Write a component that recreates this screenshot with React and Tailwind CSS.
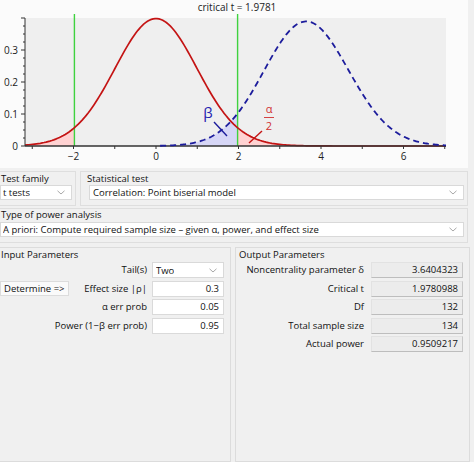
import React from "react";

function Chart() {
  const X = (t) => 156 + t * 41.25;
  const Y = (p) => 146 - p * 320;
  const df = 132;
  const c0 = 0.3982;
  const ft = (t) => c0 * Math.pow(1 + (t * t) / df, -(df + 1) / 2);
  const mu = 3.66;
  const sd = 1.025;
  const fn = (t) => {
    const z = (t - mu) / sd;
    const skew = 1 + 0.04 * (z * z * z - 3 * z) / 6;
    return (Math.exp(-0.5 * z * z) / (sd * Math.sqrt(2 * Math.PI))) * skew;
  };
  const path = (f, a, b, n = 220) => {
    let d = "";
    for (let i = 0; i <= n; i++) {
      const t = a + ((b - a) * i) / n;
      d += (i ? "L" : "M") + X(t).toFixed(2) + "," + Y(Math.max(0, f(t))).toFixed(2);
    }
    return d;
  };
  const area = (f, a, b) => path(f, a, b, 80) + `L${X(b).toFixed(2)},146L${X(a).toFixed(2)},146Z`;
  const tc = 1.978;
  const tmin = (25 - 156) / 41.25;
  const tmax = (446 - 156) / 41.25;

  const yTicks = [];
  for (let i = 0; i <= 16; i++) {
    const v = i * 0.025;
    const major = i % 4 === 0;
    yTicks.push(
      <line key={"y" + i} x1={major ? 21 : 23} x2={25} y1={Y(v)} y2={Y(v)} stroke="#333" strokeWidth="1" />
    );
  }
  const xTicks = [];
  for (let t = -3; t <= 7; t++) {
    xTicks.push(<line key={"x" + t} x1={X(t)} x2={X(t)} y1={146} y2={149} stroke="#333" strokeWidth="1" />);
  }

  return (
    <svg width="468" height="168" className="block bg-[#fbfbfb]" style={{ fontFamily: "'Open Sans', 'Noto Sans', sans-serif" }}>
      <text x="237" y="11" textAnchor="middle" fontSize="10" fill="#222">critical t = 1.9781</text>
      <rect x="25" y="18" width="421" height="128" fill="#efefef" />
      <path d={area(ft, tmin, -tc)} fill="#ffd2d2" />
      <path d={area(fn, -0.5, tc)} fill="#d6d6f6" />
      <path d={area(ft, tc, tmax)} fill="#ffd2d2" />
      <line x1={X(-tc)} x2={X(-tc)} y1="14" y2="146" stroke="#3fd23f" strokeWidth="1.4" />
      <line x1={X(tc)} x2={X(tc)} y1="14" y2="146" stroke="#3fd23f" strokeWidth="1.4" />
      <path d={path(ft, tmin, tmax)} fill="none" stroke="#c41414" strokeWidth="1.7" />
      <line x1="25" x2="25" y1="18" y2="146" stroke="#333" strokeWidth="1" />
      <line x1="25" x2="446" y1="146" y2="146" stroke="#333" strokeWidth="1.4" />
      <path d={path(fn, 0.1, tmax)} fill="none" stroke="#1c1c9c" strokeWidth="1.8" strokeDasharray="6 4" />
      {yTicks}
      {xTicks}
      {[
        ["0.3", 0.3],
        ["0.2", 0.2],
        ["0.1", 0.1],
        ["0", 0],
      ].map(([s, v]) => (
        <text key={s} x="18" y={Y(v) + 3.5} textAnchor="end" fontSize="10" fill="#222">
          {s}
        </text>
      ))}
      {[
        ["\u22122", -2],
        ["0", 0],
        ["2", 2],
        ["4", 4],
        ["6", 6],
      ].map(([s, v]) => (
        <text key={s} x={X(v)} y="160" textAnchor="middle" fontSize="10" fill="#222">
          {s}
        </text>
      ))}
      <text x="208" y="118" textAnchor="middle" fontSize="15" fill="#2323b0">β</text>
      <line x1="214" y1="122" x2="227" y2="136" stroke="#1c1c9c" strokeWidth="1.4" />
      <text x="269" y="112.5" textAnchor="middle" fontSize="11" fill="#d03030">α</text>
      <line x1="264" x2="274" y1="117.5" y2="117.5" stroke="#d03030" strokeWidth="0.9" />
      <text x="269" y="130" textAnchor="middle" fontSize="11" fill="#d03030">2</text>
      <line x1="249" y1="143" x2="262" y2="131" stroke="#c41414" strokeWidth="1.4" />
    </svg>
  );
}

function Chevron() {
  return (
    <svg width="8" height="5" viewBox="0 0 8 5" className="shrink-0">
      <path d="M0.5 0.8 L4 4 L7.5 0.8" fill="none" stroke="#a8a8a8" strokeWidth="1" />
    </svg>
  );
}

function Select({ text, className = "" }) {
  return (
    <div className={"flex h-[15px] items-center justify-between border border-[#d9d9d9] bg-white pl-[2px] pr-[6px] leading-[13px] " + className}>
      <span className="truncate">{text}</span>
      <Chevron />
    </div>
  );
}

function InputField({ value }) {
  return (
    <div className="flex h-[16px] w-[72px] items-center justify-end border border-[#dadada] bg-white pr-[4px] leading-[14px]">
      {value}
    </div>
  );
}

function OutField({ value }) {
  return (
    <div className="flex h-[16px] w-[92px] items-center justify-end border border-[#e2e2e2] border-b-[#bdbdbd] border-r-[#c8c8c8] bg-[#ececec] pr-[4px] leading-[14px]">
      {value}
    </div>
  );
}

export default function App() {
  const inputs = [
    { label: "Tail(s)", field: <Select text="Two" className="h-[16px] w-[72px] pl-[3px]" /> },
    { label: "Effect size |ρ|", field: <InputField value="0.3" />, button: true },
    { label: "α err prob", field: <InputField value="0.05" /> },
    { label: "Power (1−β err prob)", field: <InputField value="0.95" /> },
  ];
  const outputs = [
    ["Noncentrality parameter δ", "3.6404323"],
    ["Critical t", "1.9780988"],
    ["Df", "132"],
    ["Total sample size", "134"],
    ["Actual power", "0.9509217"],
  ];
  return (
    <div className="flex h-[462px] w-[474px] flex-col overflow-hidden bg-[#f0f0f0] font-['Open_Sans','Noto_Sans',sans-serif] text-[9.5px] text-[#111]">
      <div className="flex h-[168px] shrink-0">
        <Chart />
      </div>
      <div className="flex flex-col pt-[3px]">
        <div className="flex h-[35px]">
          <div className="w-[76px] border-y border-r border-[#dedede]">
            <div className="h-[13px] pl-[1px] leading-[13px]">Test family</div>
            <Select text="t tests" className="w-[72px]" />
          </div>
          <div className="ml-[4px] mr-[6px] flex-1 border border-[#dedede]">
            <div className="h-[13px] pl-[6px] leading-[13px]">Statistical test</div>
            <Select text="Correlation: Point biserial model" className="ml-[8px] mr-[3px] pl-[3px]" />
          </div>
        </div>
        <div className="mr-[6px] mt-[2px] h-[35px] border-y border-r border-[#dedede]">
          <div className="h-[12px] pl-[1px] leading-[12px]">Type of power analysis</div>
          <Select text="A priori: Compute required sample size – given α, power, and effect size" className="mr-[3px] mt-[1px]" />
        </div>
      </div>
      <div className="mt-[4px] flex flex-1">
        <div className="w-[231px] border-y border-r border-[#dcdcdc]">
          <div className="h-[13px] pl-[1px] pt-[2px] leading-[10px]">Input Parameters</div>
          {inputs.map((r) => (
            <div key={r.label} className="flex h-[18.5px] items-center">
              <div className="flex w-[147px] items-center justify-between">
                {r.button ? (
                  <div className="flex h-[15px] w-[69px] items-center border border-[#dcdcdc] bg-[#fafafa] pl-[3px] leading-[13px]">
                    Determine =&gt;
                  </div>
                ) : (
                  <span />
                )}
                <span className="whitespace-nowrap">{r.label}</span>
              </div>
              <div className="ml-[5px]">{r.field}</div>
            </div>
          ))}
        </div>
        <div className="ml-[4px] mr-[4px] flex-1 border border-[#dcdcdc]">
          <div className="h-[13px] pl-[3px] pt-[2px] leading-[10px]">Output Parameters</div>
          {outputs.map(([l, v]) => (
            <div key={l} className="flex h-[18.5px] items-center">
              <div className="w-[128px] whitespace-nowrap text-right">{l}</div>
              <div className="ml-[7px]">
                <OutField value={v} />
              </div>
            </div>
          ))}
        </div>
      </div>
    </div>
  );
}
